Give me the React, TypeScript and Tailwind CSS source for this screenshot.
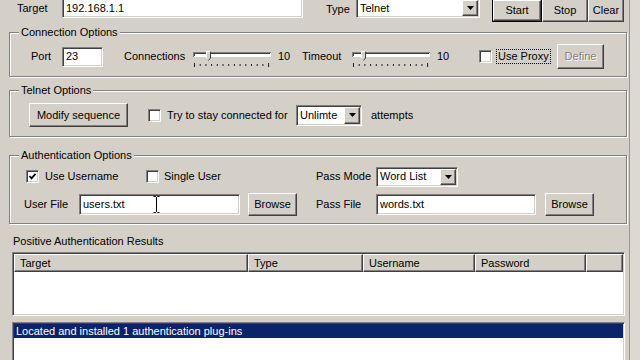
import React from "react";

// ============================================================================
// Classic Win32 control styles
// ============================================================================

const raised =
    "bg-[#d4d0c8] border border-t-white border-l-white border-r-[#404040] border-b-[#404040] shadow-[inset_-1px_-1px_0_#808080]";
const sunken =
    "bg-white border border-t-[#808080] border-l-[#808080] border-r-white border-b-white shadow-[inset_1px_1px_0_#404040,inset_-1px_-1px_0_#d4d0c8]";

function Button({ label, className = "", disabled = false }: { label: string; className?: string; disabled?: boolean }) {
    return (
        <div className={`${raised} flex items-center justify-center shrink-0 ${className}`}>
            <span className={disabled ? "text-[#808080] [text-shadow:1px_1px_0_#fff]" : ""}>{label}</span>
        </div>
    );
}

function Field({ value, className = "" }: { value: string; className?: string }) {
    return (
        <div className={`${sunken} flex items-center pl-[3px] shrink-0 ${className}`}>
            <span>{value}</span>
        </div>
    );
}

function Combo({ value, className = "" }: { value: string; className?: string }) {
    return (
        <div className={`${sunken} flex p-[1px] shrink-0 ${className}`}>
            <span className="flex-1 flex items-center pl-[2px]">{value}</span>
            <span className={`${raised} w-[16px] flex items-center justify-center`}>
                <svg width="7" height="4" viewBox="0 0 7 4">
                    <polygon points="0,0 7,0 3.5,4" fill="#000" />
                </svg>
            </span>
        </div>
    );
}

function Check({ checked = false, className = "" }: { checked?: boolean; className?: string }) {
    return (
        <div className={`${sunken} w-[13px] h-[13px] flex items-center justify-center shrink-0 ${className}`}>
            {checked && (
                <svg width="9" height="9" viewBox="0 0 9 9">
                    <path d="M1.5 4 L3.5 6.3 L7.5 1.8" stroke="#000" strokeWidth="1.8" fill="none" />
                </svg>
            )}
        </div>
    );
}

function Slider({ thumb }: { thumb: number }) {
    const ticks = Array.from({ length: 14 }, (_, i) => 1 + i * 5.7);
    return (
        <svg width="80" height="25" viewBox="0 0 80 25" className="shrink-0">
            {/* track */}
            <rect x="0" y="8" width="78" height="5" fill="#fff" />
            <line x1="0" y1="8.5" x2="78" y2="8.5" stroke="#808080" />
            <line x1="1" y1="9.5" x2="77" y2="9.5" stroke="#404040" />
            <line x1="0.5" y1="8" x2="0.5" y2="13" stroke="#808080" />
            <line x1="1.5" y1="9" x2="1.5" y2="12" stroke="#404040" />
            {/* thumb */}
            <path d={`M${thumb} 7 H${thumb + 5} V14 L${thumb + 2.5} 17 L${thumb} 14 Z`} fill="#d4d0c8" />
            <path d={`M${thumb + 0.5} 14 V7.5 H${thumb + 5}`} stroke="#fff" fill="none" />
            <path d={`M${thumb + 4.5} 7.5 V14 L${thumb + 2.5} 16.5`} stroke="#404040" fill="none" />
            {/* ticks */}
            {ticks.map((x, i) => (
                <rect key={i} x={x} y={i === 0 || i === ticks.length - 1 ? 19 : 20} width="1" height={i === 0 || i === ticks.length - 1 ? 4 : 2} fill="#202020" />
            ))}
        </svg>
    );
}

function Group({ title, className = "", children }: { title: string; className?: string; children: React.ReactNode }) {
    return (
        <fieldset
            className={`ml-[9px] w-[618px] border border-[#808080] shadow-[inset_1px_1px_0_#fff,1px_1px_0_#fff] ${className}`}
        >
            <legend className="ml-[9px] px-[2px] bg-[#d4d0c8] leading-[13px]">{title}</legend>
            {children}
        </fieldset>
    );
}

// ============================================================================
// App
// ============================================================================

export default function App(): React.JSX.Element {
    return (
        <div
            className="w-[640px] h-[360px] overflow-hidden flex bg-[#d4d0c8] text-black text-[11px] leading-[13px]"
            style={{ fontFamily: '"Liberation Sans", Arial, sans-serif' }}
        >
            <div className="w-[629px] flex flex-col shrink-0">
                {/* Target row */}
                <div className="flex items-start h-[21px] -mt-[2px] shrink-0">
                    <span className="ml-[17px] w-[45px] mt-[4px]">Target</span>
                    <Field value="192.168.1.1" className="w-[241px] h-[20px]" />
                    <span className="ml-[23px] w-[30px] mt-[5px]">Type</span>
                    <Combo value="Telnet" className="w-[124px] h-[20px]" />
                    <div className="ml-[12px] mt-[1px] w-[50px] h-[23px] border border-black shrink-0">
                        <div className={`${raised} w-full h-full flex items-center justify-center`}>Start</div>
                    </div>
                    <Button label="Stop" className="mt-[1px] w-[46px] h-[23px]" />
                    <Button label="Clear" className="mt-[1px] w-[36px] h-[23px]" />
                </div>

                {/* Connection Options */}
                <Group title="Connection Options" className="mt-[7px] pt-[5px] pb-[7px]">
                    <div className="flex items-center h-[25px]">
                        <span className="ml-[21px] w-[31px]">Port</span>
                        <Field value="23" className="w-[41px] h-[20px]" />
                        <span className="ml-[21px] w-[69px]">Connections</span>
                        <Slider thumb={13} />
                        <span className="ml-[5px] w-[24px]">10</span>
                        <span className="w-[50px]">Timeout</span>
                        <Slider thumb={9} />
                        <span className="ml-[5px] w-[42px]">10</span>
                        <Check />
                        <div className="w-[65px] shrink-0">
                            <span className="ml-[4px] inline-block border border-dotted border-black px-[1px]">Use Proxy</span>
                        </div>
                        <Button label="Define" disabled className="w-[47px] h-[25px]" />
                    </div>
                </Group>

                {/* Telnet Options */}
                <Group title="Telnet Options" className="mt-[7px] pt-[6px] pb-[9px]">
                    <div className="flex items-center h-[24px]">
                        <Button label="Modify sequence" className="ml-[19px] w-[99px] h-[24px]" />
                        <Check className="ml-[20px]" />
                        <span className="ml-[6px] w-[129px]">Try to stay connected for</span>
                        <Combo value="Unlimte" className="w-[66px] h-[21px]" />
                        <span className="ml-[9px]">attempts</span>
                    </div>
                </Group>

                {/* Authentication Options */}
                <Group title="Authentication Options" className="mt-[12px] pt-[4px] pb-[7px]">
                    <div className="flex items-center h-[21px]">
                        <Check checked className="ml-[16px]" />
                        <span className="ml-[6px] w-[101px]">Use Username</span>
                        <Check />
                        <span className="ml-[5px] w-[152px]">Single User</span>
                        <span className="w-[60px]">Pass Mode</span>
                        <Combo value="Word List" className="w-[82px] h-[20px]" />
                    </div>
                    <div className="relative flex items-center h-[24px] mt-[5px]">
                        <span className="ml-[14px] w-[55px]">User File</span>
                        <Field value="users.txt" className="w-[161px] h-[21px]" />
                        <Button label="Browse" className="ml-[8px] w-[49px] h-[23px]" />
                        <span className="ml-[19px] w-[60px]">Pass File</span>
                        <Field value="words.txt" className="w-[160px] h-[21px]" />
                        <Button label="Browse" className="ml-[9px] w-[49px] h-[23px]" />
                        {/* mouse I-beam cursor */}
                        <svg width="7" height="17" viewBox="0 0 7 17" className="absolute left-[143px] top-[4px]">
                            <path d="M0.5 0.5 H2.5 L3.5 1.5 L4.5 0.5 H6.5 M3.5 1.5 V15.5 M0.5 16.5 H2.5 L3.5 15.5 L4.5 16.5 H6.5" stroke="#000" fill="none" />
                        </svg>
                    </div>
                </Group>

                {/* Results */}
                <span className="ml-[13px] mt-[11px] shrink-0">Positive Authentication Results</span>
                <div className={`${sunken} ml-[12px] mt-[4px] w-[613px] h-[64px] p-[1px] shrink-0`}>
                    <div className="flex h-[18px]">
                        <div className={`${raised} w-[234px] flex items-center pl-[5px]`}>Target</div>
                        <div className={`${raised} w-[115px] flex items-center pl-[5px]`}>Type</div>
                        <div className={`${raised} w-[112px] flex items-center pl-[5px]`}>Username</div>
                        <div className={`${raised} w-[111px] flex items-center pl-[5px]`}>Password</div>
                        <div className={`${raised} flex-1`} />
                    </div>
                </div>

                {/* Log */}
                <div className={`${sunken} ml-[12px] mt-[6px] w-[613px] h-[42px] p-[1px] shrink-0`}>
                    <div className="h-[14px] bg-[#0a246a] text-white flex items-center pl-[2px]">
                        Located and installed 1 authentication plug-ins
                    </div>
                </div>
            </div>

            {/* window edge */}
            <div className="flex-1 border-l border-[#9a978f] bg-[#dcd9d2]" />
        </div>
    );
}
